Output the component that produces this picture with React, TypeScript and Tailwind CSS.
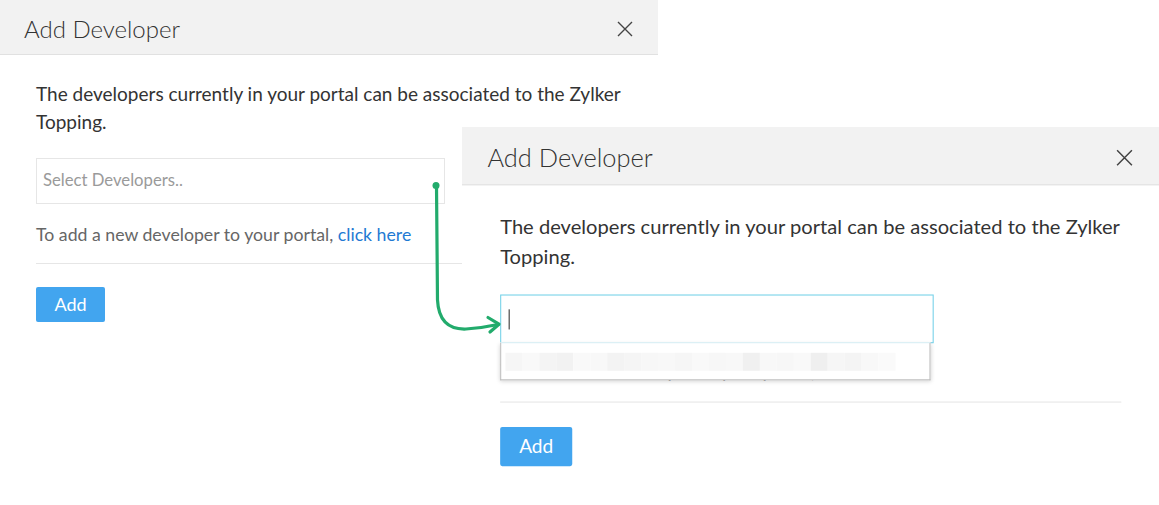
import React from 'react';

// pixelated (blurred) suggestion row shown in the open dropdown
const blurCells = [
    'bg-[#f6f6f6]', 'bg-[#f9f9f9]', 'bg-[#f4f4f4]', 'bg-[#f2f2f2]', 'bg-[#f9f9f9]',
    'bg-[#f8f8f8]', 'bg-[#f3f3f3]', 'bg-[#f5f5f5]', 'bg-[#f7f7f7]', 'bg-[#f8f8f8]',
    'bg-[#f6f6f6]', 'bg-[#f9f9f9]', 'bg-[#f7f7f7]', 'bg-[#f8f8f8]', 'bg-[#f0f0f0]',
    'bg-[#f8f8f8]', 'bg-[#f7f7f7]', 'bg-[#f9f9f9]', 'bg-[#efefef]', 'bg-[#f6f6f6]',
    'bg-[#f4f4f4]', 'bg-[#f8f8f8]', 'bg-[#fafafa]',
];

const CloseIcon = () => (
    <svg width="16" height="16" viewBox="0 0 16 16" className="text-[#444]">
        <path d="M1 1L15 15M15 1L1 15" stroke="currentColor" strokeWidth="1.4" fill="none" />
    </svg>
);

interface DialogProps {
    focused?: boolean;
}

const AddDeveloperDialog = ({ focused = false }: DialogProps) => {
    return (
        <div className="w-[658px] h-[505px] bg-white flex flex-col">
            {/* Header */}
            <div className="h-[55px] shrink-0 flex items-center justify-between pl-6 pr-[25px] pt-[3px] bg-[#f2f2f2] border-b border-[#e1e1e1]">
                <h2 className="text-[24px] font-light text-[#333]">Add Developer</h2>
                <CloseIcon />
            </div>

            {/* Body */}
            <div className="px-9 pt-[25px] flex flex-col">
                <p className="w-[610px] text-[19px] leading-[28px] text-[#333]">
                    The developers currently in your portal can be associated to the Zylker Topping.
                </p>

                <div className="relative mt-[22px] w-[409px]">
                    <div
                        className={
                            focused
                                ? 'h-[46px] border border-[#74d1e8] bg-white flex items-center pl-[7px]'
                                : 'h-[46px] border border-[#e6e6e6] bg-white flex items-center pl-[6px]'
                        }
                    >
                        {focused ? (
                            <span className="w-px h-[19px] bg-[#333]" />
                        ) : (
                            <span className="text-[16.7px] text-[#9a9a9a]">Select Developers..</span>
                        )}
                    </div>
                    {focused && (
                        <div className="absolute left-0 top-[45px] w-[406px] h-[36px] bg-white border border-[#bdbdbd] border-t-[#d9eef5] shadow-[0_2px_4px_rgba(0,0,0,0.18)] flex items-start pl-[4px] pt-[9px] z-10">
                            {blurCells.map((c, i) => (
                                <div key={i} className={`w-[16px] h-[17px] ${c}`} />
                            ))}
                        </div>
                    )}
                </div>

                <p
                    className={
                        focused
                            ? 'mt-[15px] text-[17.7px] leading-[24px] text-[#666]'
                            : 'mt-[19px] text-[17.7px] leading-[24px] text-[#666]'
                    }
                >
                    To add a new developer to your portal, <span className="text-[#1f7ad3]">click here</span>
                </p>

                <div className="mt-[16px] h-px w-full bg-[#e6e6e6]" />

                <div className="mt-[23px]">
                    <button
                        className={
                            focused
                                ? 'w-[68px] h-[37px] rounded-[2px] bg-[#42a5ef] text-white text-[18px]'
                                : 'w-[69px] h-[35px] rounded-[2px] bg-[#42a5ef] text-white text-[18px]'
                        }
                    >
                        Add
                    </button>
                </div>
            </div>
        </div>
    );
};

const Arrow = () => (
    <svg
        width="1159"
        height="505"
        viewBox="0 0 1159 505"
        className="absolute inset-0 pointer-events-none z-20"
    >
        <circle cx="436" cy="185.5" r="3.5" fill="#22ab6c" />
        <path
            d="M436.5 186 L437.5 300 Q439 330 466 329 Q482 328 498 324.5"
            stroke="#22ab6c"
            strokeWidth="3.2"
            fill="none"
            strokeLinecap="round"
        />
        <path
            d="M488 317.5 L499 324.2 L490 332"
            stroke="#22ab6c"
            strokeWidth="3.2"
            fill="none"
            strokeLinecap="round"
            strokeLinejoin="round"
        />
    </svg>
);

export default function App() {
    return (
        <div className="relative w-[1159px] h-[505px] overflow-hidden bg-white font-[family-name:Lato,sans-serif]">
            {/* first state: closed select */}
            <div className="absolute left-0 top-0">
                <AddDeveloperDialog />
            </div>

            {/* second state: focused select, shown slightly enlarged */}
            <div className="absolute left-[462px] top-[127px] origin-top-left scale-[1.06]">
                <AddDeveloperDialog focused />
            </div>

            <Arrow />
        </div>
    );
}
